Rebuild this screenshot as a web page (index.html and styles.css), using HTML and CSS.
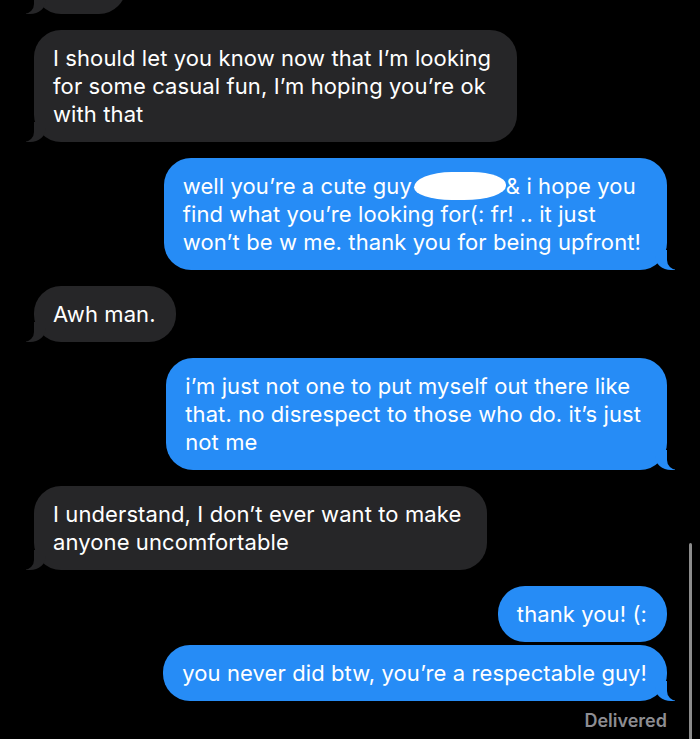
FILE: index.html
```html
<html>
<head>
  <title>Messages</title>
  <meta charset="utf-8">
  <meta name="viewport" content="width=device-width, initial-scale=1">
  <link rel="stylesheet" href="styles.css">
</head>
<body>

<div class="screen">
  <div class="thread">
    <!-- earlier message, scrolled mostly out of view -->
    <div class="msg them tail cut"></div>

    <div class="msg them tail multi">I should let you know now that I’m looking<br>for some casual fun, I’m hoping you’re ok<br>with that</div>

    <div class="msg me tail multi">well you’re a cute guy<span class="redact"></span>&amp; i hope you<br>find what you’re looking for(: fr! .. it just<br>won’t be w me. thank you for being upfront!</div>

    <div class="msg them tail">Awh man.</div>

    <div class="msg me tail multi">i’m just not one to put myself out there like<br>that. no disrespect to those who do. it’s just<br>not me</div>

    <div class="msg them tail multi">I understand, I don’t ever want to make<br>anyone uncomfortable</div>

    <div class="msg me">thank you! (:</div>
    <div class="msg me tail next">you never did btw, you’re a respectable guy!</div>

    <div class="status">Delivered</div>
  </div>

  <!-- scroll indicator sits over the thread -->
  <div class="scroll-bar"></div>
</div>

</body>
</html>
```

FILE: styles.css
```css
* {
  box-sizing: border-box;
}

html, body {
  margin: 0;
  background-color: #000;
}

body {
  font-family: Inter, "Noto Sans", Arial, sans-serif;
}

.screen {
  position: relative;
  width: 700px;
  height: 739px;
  overflow: hidden;
}

/* the conversation column, scrolled a bit so the first bubble is cut */
.thread {
  display: flex;
  flex-direction: column;
  gap: 16px;
  padding: 0 33px 0 34px;
  margin-top: -42px;
}

/* Message bubbles */
.msg {
  position: relative;
  padding: 14px 20px 14px 19px;
  border-radius: 27px;
  font-size: 22px;
  line-height: 28px;
  letter-spacing: 0.1px;
  color: #fff;
  white-space: nowrap;
}

.msg.multi {
  padding-right: 26px;
}

.msg.cut {
  width: 92px;
  height: 56px;
}

.them {
  align-self: flex-start;
  background-color: #262628;
}

.me {
  align-self: flex-end;
  background-color: #268cf6;
}

.me.next {
  margin-top: -13px;
}

/* bubble tails */
.me.tail::before {
  content: "";
  position: absolute;
  bottom: 0;
  right: -8px;
  width: 20px;
  height: 20px;
  background-color: #268cf6;
  border-bottom-left-radius: 16px 14px;
}

.me.tail::after {
  content: "";
  position: absolute;
  bottom: 0;
  right: -10px;
  width: 10px;
  height: 20px;
  background-color: #000;
  border-bottom-left-radius: 10px;
}

.them.tail::before {
  content: "";
  position: absolute;
  bottom: 0;
  left: -8px;
  width: 20px;
  height: 20px;
  background-color: #262628;
  border-bottom-right-radius: 16px 14px;
}

.them.tail::after {
  content: "";
  position: absolute;
  bottom: 0;
  left: -10px;
  width: 10px;
  height: 20px;
  background-color: #000;
  border-bottom-right-radius: 10px;
}

/* white scribble over the name */
.redact {
  display: inline-block;
  vertical-align: top;
  width: 92px;
  height: 28px;
  margin-left: 2px;
  background-color: #fff;
  border-radius: 45% 40% 50% 45% / 60% 50% 55% 50%;
}

.status {
  align-self: flex-end;
  margin-top: -6px;
  font-size: 18px;
  line-height: 20px;
  font-weight: 600;
  color: #8d8d92;
}

.scroll-bar {
  position: absolute;
  top: 543px;
  right: 8px;
  bottom: -4px;
  width: 3px;
  border-radius: 2px;
  background-color: #8c8c8c;
}
```
